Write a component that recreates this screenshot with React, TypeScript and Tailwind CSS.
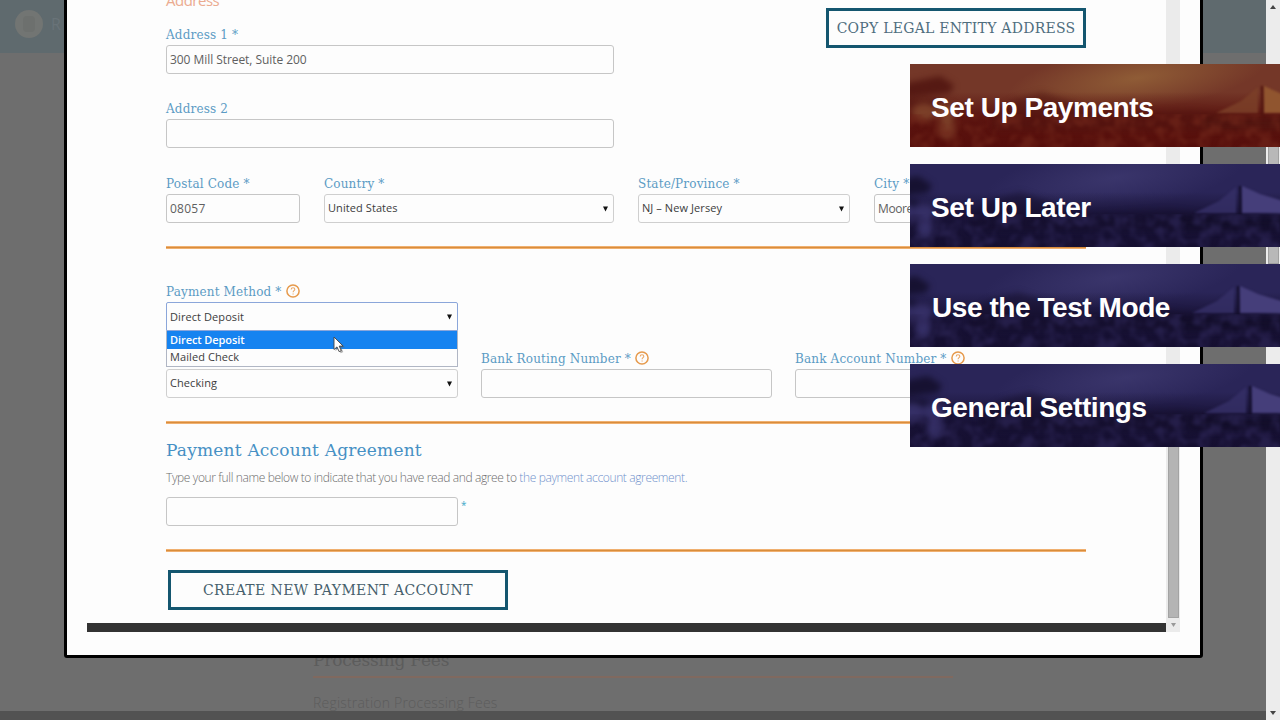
import type { ReactNode } from 'react';

interface FieldProps {
  label?: ReactNode;
  help?: boolean;
  className: string;
  children: ReactNode;
}

interface BannerProps {
  id: string;
  title: string;
  textClass: string;
  shift: number;
  active?: boolean;
}

const BLUE = {
  sky: '#2a2558',
  glow: '#3a356b',
  crowd: '#150f30',
  speck: '#2d2657',
  tent: '#453e7a',
  tentDim: '#352f66',
  tree: '#130e2a',
};

const RED = {
  sky: '#743728',
  glow: '#8f5c36',
  crowd: '#560e0b',
  speck: '#70261a',
  tent: '#90552f',
  tentDim: '#7b3f28',
  tree: '#50140f',
};

/** Round orange help marker that follows some labels */
function HelpIcon() {
  return (
    <svg width="14" height="14" viewBox="0 0 14 14" className="ml-1 shrink-0">
      <circle cx="7" cy="7" r="6.1" fill="none" stroke="#e69a4c" strokeWidth="1.5" />
      <path
        d="M5.2 5.5c0-1.1.8-1.8 1.8-1.8s1.8.7 1.8 1.6c0 1.3-1.7 1.4-1.7 2.9M7.1 9.4v1.1"
        fill="none"
        stroke="#eba765"
        strokeWidth="1.1"
      />
    </svg>
  );
}

function Field({ label, help, className, children }: FieldProps) {
  return (
    <div className={`flex flex-col ${className}`}>
      <div className="flex h-[22px] items-center whitespace-nowrap font-['DejaVu_Serif',serif] text-[12px] tracking-[0.16px] text-[#5b9bc4]">
        {label && <span className="pt-px">{label}</span>}
        {help && <HelpIcon />}
      </div>
      {children}
    </div>
  );
}

function TextBox({ value, valueClass = 'tracking-[-0.06px]' }: { value?: string; valueClass?: string }) {
  return (
    <div
      className={`flex h-[29px] items-center overflow-hidden whitespace-nowrap rounded-[3px] border border-[#c6c6c6] px-[3px] text-[12px] text-[#606060] ${valueClass}`}
    >
      {value}
    </div>
  );
}

function SelectBox({ value, open }: { value: string; open?: boolean }) {
  return (
    <div
      className={`flex h-[29px] items-center justify-between border px-[3px] text-[11px] tracking-[0.08px] text-[#3c3c3c] ${
        open ? 'rounded-t-[2px] border-[#8ba6da] pt-px' : 'rounded-[3px] border-[#cfcfcf]'
      }`}
    >
      <span>{value}</span>
      <svg width="5" height="6" viewBox="0 0 5 6" className="mr-[2px]">
        <path d="M0 0.5h5L2.5 5.5z" fill="#111" />
      </svg>
    </div>
  );
}

function Rule() {
  return <div className="h-[3px] shrink-0 border-y border-[#f0b070] bg-[#d98d3c]" />;
}

/** Tinted festival photo strip with a title over it */
function Banner({ id, title, textClass, shift, active }: BannerProps) {
  const c = active ? RED : BLUE;
  return (
    <div className="relative h-[83px] w-[370px] overflow-hidden">
      <svg
        width="370"
        height="83"
        viewBox="0 0 370 83"
        className="absolute inset-0"
        colorInterpolationFilters="sRGB"
      >
        <defs>
          <radialGradient id={`${id}-glow`}>
            <stop offset="0" stopColor={c.glow} />
            <stop offset="1" stopColor={c.glow} stopOpacity="0" />
          </radialGradient>
          <linearGradient id={`${id}-crowd`} x1="0" y1="0" x2="0" y2="1">
            <stop offset="0" stopColor={c.crowd} stopOpacity="0" />
            <stop offset="0.45" stopColor={c.crowd} stopOpacity="0.85" />
            <stop offset="1" stopColor={c.crowd} />
          </linearGradient>
          <filter id={`${id}-soft`} x="-20%" y="-20%" width="140%" height="140%">
            <feGaussianBlur stdDeviation="3" />
          </filter>
          <filter id={`${id}-edge`}>
            <feGaussianBlur stdDeviation="1.3" />
          </filter>
          <filter id={`${id}-noise`} x="0" y="0" width="100%" height="100%">
            <feTurbulence type="fractalNoise" baseFrequency="0.08 0.08" numOctaves="2" seed="8" />
            <feColorMatrix values="0 0 0 0 0  0 0 0 0 0  0 0 0 0 0  3 0 0 0 -1.2" result="mask" />
            <feComposite in="SourceGraphic" in2="mask" operator="in" />
            <feGaussianBlur stdDeviation="1.2" />
          </filter>
        </defs>
        <rect width="370" height="83" fill={c.sky} />
        <g transform={`translate(${shift} 0)`}>
          <ellipse cx="205" cy="14" rx="130" ry="34" fill={`url(#${id}-glow)`} transform="rotate(-8 205 14)" />
          <rect x="-30" y="28" width="430" height="56" fill={`url(#${id}-crowd)`} />
          <g filter={`url(#${id}-soft)`} fill={c.tree}>
            <path d="M-30 20L8 12l14 9-4 8-48 6z" opacity="0.85" />
            <path d="M60 50l22-14 28-8 30 10 30 14 90-6 60 8v12H60z" opacity="0.5" />
            <path d="M-30 36H8v8H-30z" opacity="0.7" />
            <path d="M270 52h120v14H270z" />
          </g>
          <g filter={`url(#${id}-soft)`} fill={c.tentDim}>
            <ellipse cx="-8" cy="48" rx="12" ry="9" />
            <ellipse cx="14" cy="48" rx="11" ry="8" />
            <ellipse cx="15" cy="64" rx="8" ry="11" />
          </g>
          <g filter={`url(#${id}-edge)`}>
            <path d="M284 49l25-12 17-14v26z" fill={c.tentDim} opacity="0.85" />
            <path d="M332 22l18 8 40 12v8l-34-1-24 0z" fill={c.tent} />
            <path d="M330 22l.5 30" stroke={c.tree} strokeWidth="2.2" />
          </g>
        </g>
        <rect x="0" y="50" width="370" height="36" fill={c.speck} opacity="0.65" filter={`url(#${id}-noise)`} />
      </svg>
      <div
        className={`relative flex h-full items-center whitespace-nowrap pt-[4px] font-['Liberation_Sans',Arial,sans-serif] text-[28px] font-bold tracking-[-0.43px] text-white ${textClass}`}
      >
        {title}
      </div>
    </div>
  );
}

function BackgroundPage() {
  return (
    <div className="flex h-full w-[1266px] flex-col justify-between bg-[#6e6e6e]">
      <header className="flex h-[53px] items-center bg-[#5f6a6e] pb-[5px] pl-[15px]">
        <div className="flex size-7 items-center justify-center rounded-full bg-[#727573]">
          <div className="h-4 w-3 rounded-sm bg-[#6d706e]" />
        </div>
        <div className="ml-2 text-[16px] text-[#697378]">R</div>
      </header>
      <div className="flex flex-col">
        <div className="ml-[313px] w-[640px] text-[#5c5c5c]">
          <div className="font-['DejaVu_Serif',serif] text-[17px] leading-[28px] tracking-[-0.2px]">Processing Fees</div>
          <div className="mt-[2px] h-[2px] bg-[#80695f]" />
          <div className="mt-[11px] h-[22px] text-[14px] font-light leading-[27px] tracking-[0.2px]">
            Registration Processing Fees
          </div>
        </div>
        <div className="h-[9px] bg-[#525252]" />
      </div>
    </div>
  );
}

function PageScrollbar() {
  return (
    <div className="flex h-full w-[14px] flex-col items-center justify-between bg-[#ececec]">
      <svg width="6" height="4" viewBox="0 0 6 4" className="mt-[5px]">
        <path d="M0 4L3 0l3 4z" fill="#444" />
      </svg>
      <div className="mb-auto mt-[137px] h-[118px] w-[11px] border border-[#a0a0a0] bg-[#b8b8b8]" />
      <svg width="6" height="4" viewBox="0 0 6 4" className="mb-[5px]">
        <path d="M0 0h6L3 4z" fill="#444" />
      </svg>
    </div>
  );
}

function PaymentMethodMenu() {
  return (
    <div className="absolute left-0 top-full w-full border border-t-0 border-[#b0b6c4] bg-[#fdfdfd] text-[11px] tracking-[0.08px]">
      <div className="flex h-[18px] items-center bg-[#1683f0] px-[3px] font-semibold tracking-[-0.08px] text-white">
        Direct Deposit
      </div>
      <div className="flex h-[17px] items-center px-[3px] text-[#3c3c3c]">Mailed Check</div>
      <svg width="13" height="18" viewBox="0 0 13 18" className="absolute left-[166px] top-[5px]">
        <path d="M2.5 2v13l3-2.6 2.2 4.8 2.6-1.1-2.2-4.6h4z" fill="#666" opacity="0.5" />
        <path d="M1 1v12.5l3-2.6 2.1 4.7 2.2-1-2.1-4.5h3.9z" fill="#fff" stroke="#444" strokeWidth="0.9" />
      </svg>
    </div>
  );
}

function PaymentForm() {
  return (
    <form className="flex w-[920px] flex-col">
      <div className="flex h-[74px] items-start justify-between">
        <div className="flex w-[448px] flex-col">
          <div className="-mt-[10px] mb-[13px] h-5 text-[15px] leading-5 tracking-[-0.5px] text-[#ebab90]">
            Address
          </div>
          <Field label="Address 1 *" className="w-full">
            <TextBox value="300 Mill Street, Suite 200" />
          </Field>
        </div>
        <button
          type="button"
          className="mt-2 h-10 w-[260px] whitespace-nowrap border-[3px] border-[#14566f] font-['DejaVu_Serif',serif] text-[14px] tracking-[0.25px] text-[#4f6d7d]"
        >
          COPY LEGAL ENTITY ADDRESS
        </button>
      </div>
      <Field label="Address 2" className="mt-[23px] w-[448px]">
        <TextBox />
      </Field>
      <div className="mb-[23px] mt-6 flex justify-between">
        <Field label="Postal Code *" className="w-[134px]">
          <TextBox value="08057" valueClass="tracking-[0.25px]" />
        </Field>
        <Field label="Country *" className="w-[290px]">
          <SelectBox value="United States" />
        </Field>
        <Field label="State/Province *" className="w-[212px]">
          <SelectBox value="NJ – New Jersey" />
        </Field>
        <Field label="City *" className="w-[212px]">
          <TextBox value="Moore" valueClass="tracking-[-0.4px]" />
        </Field>
      </div>
      <Rule />
      <div className="relative z-10 mt-[31px] w-[292px]">
        <Field label="Payment Method *" help className="w-full">
          <SelectBox value="Direct Deposit" open />
        </Field>
        <PaymentMethodMenu />
      </div>
      <div className="mb-[23px] mt-4 flex justify-between">
        <Field className="w-[292px]">
          <SelectBox value="Checking" />
        </Field>
        <Field label="Bank Routing Number *" help className="w-[291px]">
          <TextBox />
        </Field>
        <Field label="Bank Account Number *" help className="w-[291px]">
          <TextBox />
        </Field>
      </div>
      <Rule />
      <h2 className="mt-3 h-7 font-['DejaVu_Serif',serif] text-[17px] leading-7 tracking-[0.2px] text-[#4690c4]">
        Payment Account Agreement
      </h2>
      <p className="mt-[4px] h-5 whitespace-nowrap text-[12px] font-light leading-5 tracking-[-0.37px] text-[#6c6c6c]">
        Type your full name below to indicate that you have read and agree to{' '}
        <span className="text-[#7191cc]">the payment account agreement.</span>
      </p>
      <div className="mb-[23px] mt-[9px] flex gap-[3px]">
        <div className="w-[292px]">
          <TextBox />
        </div>
        <span className="text-[10px] leading-[17px] text-[#3fa9c9]">*</span>
      </div>
      <Rule />
      <button
        type="button"
        className="ml-0.5 mt-[18px] h-10 w-[340px] whitespace-nowrap border-[3px] border-[#14566f] font-['DejaVu_Serif',serif] text-[14px] tracking-[0.38px] text-[#475f6c]"
      >
        CREATE NEW PAYMENT ACCOUNT
      </button>
    </form>
  );
}

export default function App() {
  return (
    <div className="relative flex h-[720px] w-[1280px] overflow-hidden bg-[#6e6e6e] font-['Open_Sans','Noto_Sans',sans-serif]">
      <BackgroundPage />
      <PageScrollbar />

      <div className="absolute -top-1 left-16 flex h-[662px] w-[1139px] rounded-[3px] border-[3px] border-black bg-[#fdfdfd] pl-5 pt-px">
        <div className="flex h-[632px] w-[1079px] flex-col">
          <div className="h-[623px] pl-[79px]">
            <PaymentForm />
          </div>
          <div className="h-[9px] bg-[#333]" />
        </div>
        <div className="flex h-[632px] w-[14px] flex-col items-center justify-end bg-[#ebebeb]">
          <div className="h-[218px] w-[11px] border border-[#a3a3a3] bg-[#b4b4b4]" />
          <svg width="5" height="4" viewBox="0 0 5 4" className="mb-[5px] mt-[5px]">
            <path d="M0 0h5L2.5 4z" fill="#999" />
          </svg>
        </div>
      </div>

      <div className="absolute left-[910px] top-16 flex flex-col gap-[17px]">
        <Banner id="payments" title="Set Up Payments" textClass="pl-[21px]" shift={22} active />
        <Banner id="later" title="Set Up Later" textClass="pl-[21px]" shift={0} />
        <Banner id="test" title="Use the Test Mode" textClass="pl-[22px]" shift={-2} />
        <Banner id="general" title="General Settings" textClass="pl-[21px]" shift={10} />
      </div>
    </div>
  );
}
